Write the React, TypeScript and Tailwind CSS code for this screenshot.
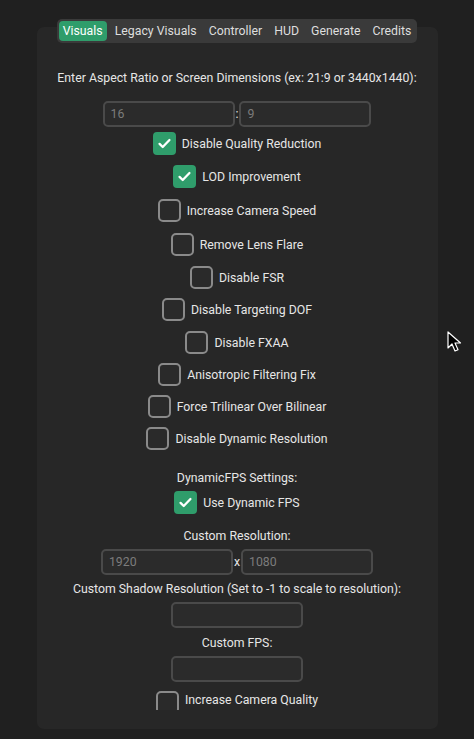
import React from "react";

const font = { fontFamily: "Roboto, 'Noto Sans', 'Liberation Sans', sans-serif" };

const tabs = ["Visuals", "Legacy Visuals", "Controller", "HUD", "Generate", "Credits"];

function Check({ label, checked, mt, labelCls = "" }: { label: string; checked?: boolean; mt: string; labelCls?: string }) {
    return (
        <div className={`flex items-center gap-[6px] ${mt}`}>
            {checked ? (
                <div className="h-[23px] w-[23px] rounded-[4px] bg-[#2f9d6b] flex items-center justify-center">
                    <svg className="h-[17px] w-[17px]" viewBox="0 0 24 24" fill="none" stroke="white" strokeWidth={3.2} strokeLinecap="round" strokeLinejoin="round">
                        <path d="M5 12.5l4.5 4.5L19 7" />
                    </svg>
                </div>
            ) : (
                <div className="h-[23px] w-[23px] rounded-[5px] border-[2.5px] border-[#8a8a8a] bg-[#2a2a2a]" />
            )}
            <span className={`text-[12.3px] leading-[16px] text-[#e6e6e6] ${labelCls}`}>{label}</span>
        </div>
    );
}

function Field({ value }: { value?: string }) {
    return (
        <div className="h-[26px] w-[132px] rounded-[5px] border-2 border-[#4a4a4a] bg-[#2b2b2b] px-[6px] flex items-center text-[12.3px] text-[#7c7c7c]">
            {value}
        </div>
    );
}

export default function App() {
    return (
        <div className="relative w-[474px] h-[739px] bg-[#202020] overflow-hidden flex flex-col items-center pt-[19px]" style={font}>
            {/* tab bar */}
            <div className="relative z-10 h-[24px] flex items-center gap-[4px] rounded-[5px] bg-[#3a3a3a] px-[2px]">
                {tabs.map((t, i) => (
                    <div
                        key={t}
                        className={`h-[20px] px-[4px] flex items-center text-[12.3px] rounded-[4px] ${i === 0 ? "bg-[#2f9d6b] text-white" : "text-[#dedede]"}`}
                    >
                        {t}
                    </div>
                ))}
            </div>

            {/* panel */}
            <div className="-mt-[16px] w-[401px] h-[702px] rounded-[7px] bg-[#272727] pb-[19px] flex flex-col">
                <div className="flex-1 overflow-hidden flex flex-col items-center pt-[43px]">
                    <p className="text-[12.3px] leading-[16px] text-[#e6e6e6]">Enter Aspect Ratio or Screen Dimensions (ex: 21:9 or 3440x1440):</p>
                    <div className="mt-[15px] flex items-center gap-[1px]">
                        <Field value="16" />
                        <span className="text-[12.3px] text-[#e6e6e6]">:</span>
                        <Field value="9" />
                    </div>

                    <Check label="Disable Quality Reduction" checked mt="mt-[5px]" />
                    <Check label="LOD Improvement" checked mt="mt-[10px]" />
                    <Check label="Increase Camera Speed" mt="mt-[11px]" />
                    <Check label="Remove Lens Flare" mt="mt-[11px]" />
                    <Check label="Disable FSR" mt="mt-[10px]" />
                    <Check label="Disable Targeting DOF" mt="mt-[9px]" />
                    <Check label="Disable FXAA" mt="mt-[10px]" />
                    <Check label="Anisotropic Filtering Fix" mt="mt-[9px]" />
                    <Check label="Force Trilinear Over Bilinear" mt="mt-[9px]" />
                    <Check label="Disable Dynamic Resolution" mt="mt-[9px]" />

                    <p className="mt-[20px] text-[12.3px] leading-[16px] text-[#e6e6e6]">DynamicFPS Settings:</p>
                    <Check label="Use Dynamic FPS" checked mt="mt-[5px]" />

                    <p className="mt-[14px] text-[12.3px] leading-[16px] text-[#e6e6e6]">Custom Resolution:</p>
                    <div className="mt-[5px] flex items-center gap-[1px]">
                        <Field value="1920" />
                        <span className="text-[12.3px] text-[#e6e6e6]">x</span>
                        <Field value="1080" />
                    </div>

                    <p className="mt-[6px] text-[12.3px] leading-[16px] text-[#e6e6e6]">Custom Shadow Resolution (Set to -1 to scale to resolution):</p>
                    <div className="mt-[5px]">
                        <Field />
                    </div>
                    <p className="mt-[7px] text-[12.3px] leading-[16px] text-[#e6e6e6]">Custom FPS:</p>
                    <div className="mt-[5px]">
                        <Field />
                    </div>
                    <Check label="Increase Camera Quality" mt="mt-[9px]" labelCls="-translate-y-[3px]" />
                </div>
            </div>

            {/* mouse cursor */}
            <svg className="absolute left-[447px] top-[331px] h-[22px] w-[15px]" viewBox="0 0 15 22">
                <path d="M1 1v16l4-4 3 7 3-1.3-3-6.7h5.5z" fill="black" stroke="white" strokeWidth={1.2} strokeLinejoin="round" />
            </svg>
        </div>
    );
}
